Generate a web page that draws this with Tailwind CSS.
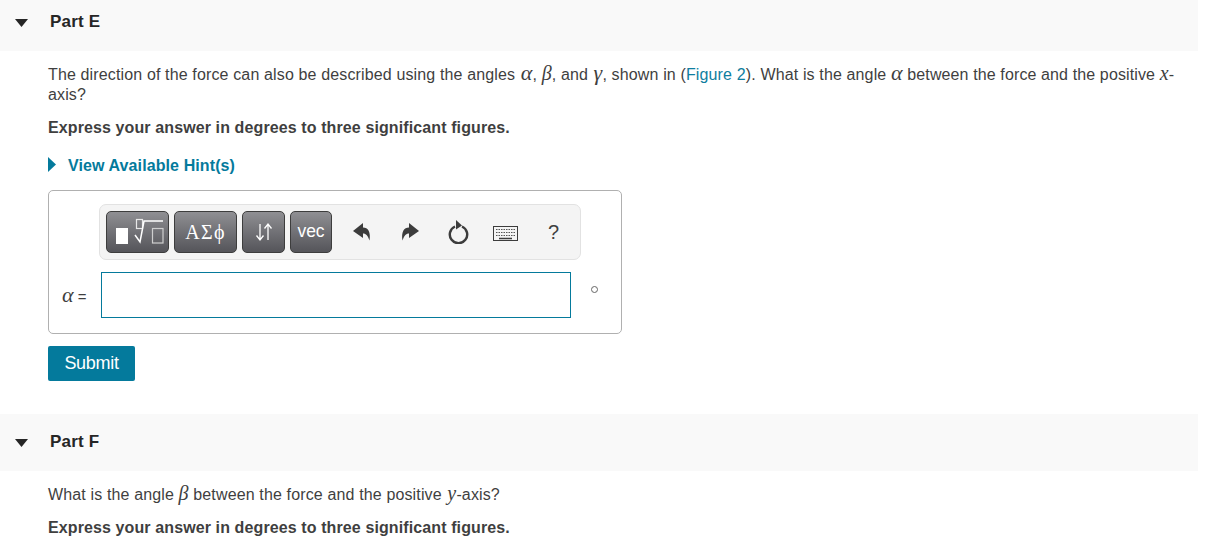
<!DOCTYPE html>
<html lang="en">
<head>
  <meta charset="UTF-8" />
  <title>Part E</title>
  <script src="https://cdn.jsdelivr.net/npm/@tailwindcss/browser@4"></script>
</head>
<body class="bg-white overflow-hidden h-[542px] font-['Liberation_Sans',Arial,sans-serif] text-[#3f3f3f] text-[16px]">
  <!-- Part E -->
  <div class="-mt-[6px] w-[1198px] h-[57px] bg-[#f9f9f9] flex items-center">
    <svg class="ml-[15px] w-[13px] h-[8px]" viewBox="0 0 13 8"><path d="M0 0h13L6.500 8z" fill="#262626"/></svg>
    <span class="ml-[22px] mb-[1px] text-[17px] font-bold text-[#262626] tracking-[0.2px]">Part E</span>
  </div>

  <div class="pl-[48px]">
    <p class="mt-[14px] leading-[20px] w-[1135px] tracking-[0.14px]">The direction of the force can also be described using the angles <i class="ml-[1px] font-['Liberation_Serif',serif] text-[22px] leading-[16px]">α</i>, <i class="font-['Liberation_Serif',serif] text-[20px] leading-[16px]">β</i>, and <i class="ml-[1px] font-['Liberation_Serif',serif] text-[22px] leading-[16px]">γ</i>, shown in (<a class="text-[#0f7ea0]">Figure 2</a>). What is the angle <i class="font-['Liberation_Serif',serif] text-[22px] leading-[16px]">α</i> <span class="tracking-[0.12px]">between the force and the positive</span> <i class="font-['Liberation_Serif',serif] text-[20px] leading-[16px]">x</i>-<br />axis?</p>
    <p class="mt-[13px] leading-[20px] font-bold tracking-[0.11px]">Express your answer in degrees to three significant figures.</p>
    <div class="mt-[18px] flex items-center h-[20px] text-[#047a9c] font-bold text-[16px] tracking-[0.1px]">
      <svg class="w-[8px] h-[15px] -mt-[4px]" viewBox="0 0 8 15"><path d="M0 0l8 7.500L0 15z" fill="#047a9c"/></svg>
      <span class="ml-[12px]">View Available Hint(s)</span>
    </div>

    <!-- answer box -->
    <div class="mt-[14px] w-[574px] h-[144px] border border-[#b0b0b0] rounded-[5px] pt-[13px] pl-[50px]">
      <div class="w-[482px] h-[56px] bg-[#f4f4f4] border border-[#e2e2e2] rounded-[7px] flex items-center pl-[6px]">
        <div class="w-[63px] h-[42px] rounded-[5px] border border-[#3d3d3d] bg-linear-to-b from-[#8f8f93] to-[#55555a] flex items-center justify-center">
          <svg class="w-[57px] h-[34px]" viewBox="0 0 57 34" fill="none">
            <rect x="7" y="13" width="12" height="16" fill="#fff"/>
            <rect x="27.500" y="4.500" width="6" height="9" stroke="#e8e8e8" stroke-width="1.200"/>
            <path d="M26 20l5 7 4-21h19" stroke="#fff" stroke-width="1.500"/>
            <rect x="43.500" y="13.500" width="10.500" height="14.500" stroke="#cfcfcf" stroke-width="1.200"/>
          </svg>
        </div>
        <div class="ml-[5px] w-[63px] h-[42px] rounded-[5px] border border-[#3d3d3d] bg-linear-to-b from-[#8f8f93] to-[#55555a] flex items-center justify-center text-white font-['Liberation_Serif',serif] text-[20px] tracking-[1.300px]">ΑΣϕ</div>
        <div class="ml-[5px] w-[43px] h-[42px] rounded-[5px] border border-[#3d3d3d] bg-linear-to-b from-[#8f8f93] to-[#55555a] flex items-center justify-center">
          <svg class="w-[18px] h-[20px]" viewBox="0 0 18 20" fill="none" stroke="#fff" stroke-width="1.300"><path d="M5 2v15M1.500 13.500L5 18l3.500-4.500M13 18V3M9.500 6.500L13 2l3.500 4.500"/></svg>
        </div>
        <div class="ml-[5px] w-[42px] h-[42px] rounded-[5px] border border-[#3d3d3d] bg-linear-to-b from-[#8f8f93] to-[#55555a] flex items-center justify-center text-white text-[17.500px] pb-[2px]">vec</div>
        <svg class="ml-[21px] w-[20px] h-[20px] mt-[2px]" viewBox="0 0 20 20"><path d="M0 8l10-8v4.500c5 0 8 4.500 6.500 13-1.500-4.500-3.500-7-6.500-7V15z" fill="#3c3c3c"/></svg>
        <svg class="ml-[27px] w-[20px] h-[20px] mt-[2px]" viewBox="0 0 20 20"><path d="M19 8L9 0v4.500c-5 0-8 4.500-6.500 13C4 13 6 10.500 9 10.500V15z" fill="#3c3c3c"/></svg>
        <svg class="ml-[28px] w-[22px] h-[24px]" viewBox="0 0 22 24" fill="none"><path d="M7 6.500a8.700 8.700 0 1 0 7 0" stroke="#3c3c3c" stroke-width="2.400"/><path d="M8 0l6 5.500-6 4z" fill="#3c3c3c"/></svg>
        <svg class="ml-[23px] w-[25px] h-[15px] mt-[3px]" viewBox="0 0 25 15" fill="none"><rect x=".5" y=".5" width="24" height="14" stroke="#3c3c3c"/><path d="M3 3.500h19M3 6.500h19M3 9.500h19" stroke="#555" stroke-dasharray="1.500 1"/><path d="M6 12.500h13" stroke="#3c3c3c" stroke-width="1.500"/></svg>
        <span class="ml-[30px] text-[#3f3f3f] text-[20px]">?</span>
      </div>
      <div class="relative mt-[12px] flex items-center">
        <span class="absolute -left-[37px] top-[6px] text-[15px] text-[#3f3f3f] whitespace-nowrap"><i class="font-['Liberation_Serif',serif] text-[22px]">α</i> =</span>
        <div class="ml-[2px] w-[470px] h-[46px] border border-[#047a9c] bg-white"></div>
        <span class="ml-[20px] w-[7px] h-[7px] rounded-full border border-[#666] mt-[-11px]"></span>
      </div>
    </div>

    <button class="mt-[12px] w-[87px] h-[35px] rounded-[2px] bg-[#047a9c] text-white text-[18px] tracking-[-0.3px] block">Submit</button>
  </div>

  <!-- Part F -->
  <div class="mt-[33px] w-[1198px] h-[57px] bg-[#f9f9f9] flex items-center">
    <svg class="ml-[15px] w-[13px] h-[8px]" viewBox="0 0 13 8"><path d="M0 0h13L6.500 8z" fill="#262626"/></svg>
    <span class="ml-[22px] mb-[1px] text-[17px] font-bold text-[#262626] tracking-[0.2px]">Part F</span>
  </div>
  <div class="pl-[48px]">
    <p class="mt-[14px] leading-[20px] tracking-[0.14px]">What is the angle <i class="font-['Liberation_Serif',serif] text-[20px] leading-[16px]">β</i> between the force and the positive <i class="ml-[1px] font-['Liberation_Serif',serif] text-[20px] leading-[16px]">y</i>-axis?</p>
    <p class="mt-[13px] leading-[20px] font-bold tracking-[0.11px]">Express your answer in degrees to three significant figures.</p>
  </div>
</body>
</html>
